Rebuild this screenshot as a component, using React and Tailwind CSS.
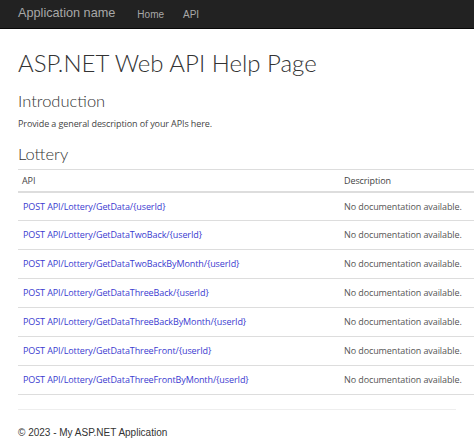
const rows = [
  "GetData",
  "GetDataTwoBack",
  "GetDataTwoBackByMonth",
  "GetDataThreeBack",
  "GetDataThreeBackByMonth",
  "GetDataThreeFront",
  "GetDataThreeFrontByMonth",
];

export default function App() {
  return (
    <div className="min-h-[444px] w-[474px] overflow-hidden bg-white">
      <div className="h-[29px] bg-[#222] border-b border-[#080808] flex items-center px-[18px] font-['Liberation_Sans',Arial,sans-serif]">
        <span className="text-[12.7px] text-[#a8a8a8]">Application name</span>
        <span className="ml-[22px] text-[10px] text-[#a8a8a8]">Home</span>
        <span className="ml-[19px] text-[10px] text-[#a8a8a8]">API</span>
      </div>
      <div className="px-[18px] font-['Open_Sans','Noto_Sans',sans-serif] text-[#444]">
        <h1 className="mt-[17px] text-[24px] leading-[34px] font-light text-[#333] font-['Lato','Open_Sans',sans-serif]">ASP.NET Web API Help Page</h1>
        <h2 className="mt-[10px] text-[16.5px] leading-[22px] font-light text-[#333] font-['Lato','Open_Sans',sans-serif]">Introduction</h2>
        <p className="mt-[5px] text-[9px] leading-[14px] tracking-[-0.1px]">Provide a general description of your APIs here.</p>
        <h2 className="mt-[12px] text-[16.5px] leading-[22px] font-light text-[#333] font-['Lato','Open_Sans',sans-serif]">Lottery</h2>
        <table className="mt-[4px] w-[470px] border-collapse text-[9px] tracking-[-0.1px]">
          <thead>
            <tr className="border-t border-[#ddd] border-b-2">
              <th className="h-[22px] pl-[4px] text-left font-normal w-[318px]">API</th>
              <th className="pl-[8px] text-left font-normal">Description</th>
            </tr>
          </thead>
          <tbody>
            {rows.map((r) => (
              <tr key={r} className="border-b border-[#ddd]">
                <td className="h-[29px] pl-[5px] text-[#3b3bd0]">POST API/Lottery/{r}/{"{userId}"}</td>
                <td className="pl-[8px] text-[#555]">No documentation available.</td>
              </tr>
            ))}
          </tbody>
        </table>
        <hr className="mt-[14px] border-[#eee]" />
        <p className="mt-[15px] text-[10px] font-['Liberation_Sans',Arial,sans-serif] text-[#333]">© 2023 - My ASP.NET Application</p>
      </div>
    </div>
  );
}
